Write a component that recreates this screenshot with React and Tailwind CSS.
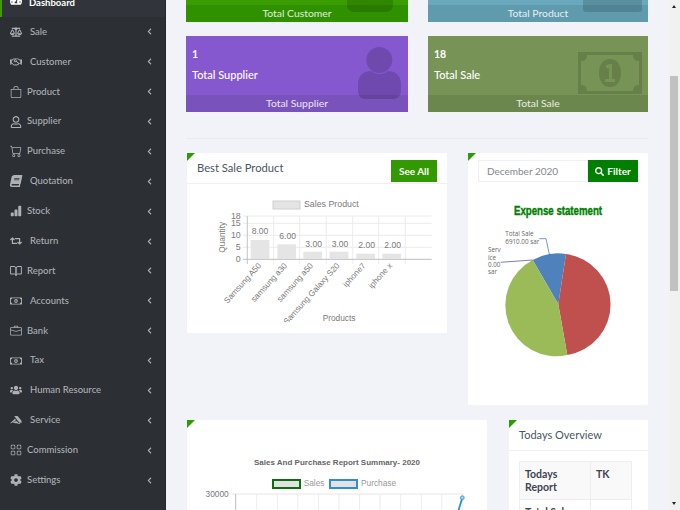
import React from "react";
import {
  FaBalanceScale,
  FaRegHandshake,
  FaRegUser,
  FaBook,
  FaRetweet,
  FaRegMoneyBillAlt,
  FaUsers,
  FaAccusoft,
  FaCog,
  FaSearch,
  FaChevronLeft,
  FaTachometerAlt,
} from "react-icons/fa";
import { BsBag, BsCart, BsBriefcase, BsGrid, BsBarChartFill } from "react-icons/bs";
import { FiBookOpen } from "react-icons/fi";

const menu = [
  { label: "Sale", Icon: FaBalanceScale, box: "w-[20px]" },
  { label: "Customer", Icon: FaRegHandshake, box: "w-[20px]" },
  { label: "Product", Icon: BsBag, box: "w-[17px]" },
  { label: "Supplier", Icon: FaRegUser, box: "w-[17px]" },
  { label: "Purchase", Icon: BsCart, box: "w-[17px]" },
  { label: "Quotation", Icon: FaBook, box: "w-[20px] -skew-x-12" },
  { label: "Stock", Icon: BsBarChartFill, box: "w-[17px]" },
  { label: "Return", Icon: FaRetweet, box: "w-[20px]" },
  { label: "Report", Icon: FiBookOpen, box: "w-[17px]" },
  { label: "Accounts", Icon: FaRegMoneyBillAlt, box: "w-[20px]" },
  { label: "Bank", Icon: BsBriefcase, box: "w-[17px]" },
  { label: "Tax", Icon: FaRegMoneyBillAlt, box: "w-[20px]" },
  { label: "Human Resource", Icon: FaUsers, box: "w-[20px]" },
  { label: "Service", Icon: FaAccusoft, box: "w-[20px]" },
  { label: "Commission", Icon: BsGrid, box: "w-[17px]" },
  { label: "Settings", Icon: FaCog, box: "w-[17px]" },
];

const Sidebar = () => (
  <aside className="w-[166px] h-[510px] shrink-0 bg-[#2c2f34] border-r border-[#24272b] font-['Lato',sans-serif] overflow-hidden">
    <div className="h-[17px] flex items-center pl-[8px] border-l-2 border-[#3c9c00] bg-[#31353b] text-white font-bold text-[9.5px] leading-none">
      <FaTachometerAlt className="text-[12px] w-[19px] pr-[7px] -mt-[18px]" />
      <span className="-mt-[12px]">Dashboard</span>
    </div>
    {menu.map(({ label, Icon, box }) => (
      <div
        key={label}
        className="h-[29.88px] flex items-center pl-[10px] text-[#adb0b4] font-medium text-[9.5px]"
      >
        <span className={`${box} shrink-0`}>
          <Icon className="text-[12px]" />
        </span>
        <span className="flex-1">{label}</span>
        <FaChevronLeft className="text-[7px] mr-[12px]" />
      </div>
    ))}
  </aside>
);

const StatCard = ({ bg, foot, value, title, children }) => (
  <div className={`relative h-[76px] overflow-hidden ${bg} text-white font-['Lato',sans-serif]`}>
    <div className="pl-[6px] pt-[12px]">
      <div className="text-[10.5px] font-bold leading-[13px]">{value}</div>
      <div className="text-[11px] font-medium leading-[14px] mt-[7px]">{title}</div>
    </div>
    <div className={`absolute bottom-0 left-0 right-0 h-[17px] ${foot} text-center text-[10.4px] leading-[16px] text-white/85`}>
      {title}
    </div>
    {children}
  </div>
);

const Corner = () => (
  <span className="absolute left-0 top-0 border-t-[8px] border-r-[8px] border-t-[#2a9d00] border-r-transparent" />
);

const BarChart = () => {
  const bars = [
    [250.7, 240, "8.00", 260, 234.3],
    [277.3, 244.3, "6.00", 287.7, 239],
    [303.3, 251.7, "3.00", 313.7, 246.7],
    [329.7, 251.7, "3.00", 340, 246.7],
    [356.3, 253.7, "2.00", 366.7, 248.3],
    [382.3, 253.7, "2.00", 392.7, 248.3],
  ];
  const names = [
    ["Samsung A50", 261.7],
    ["samsung a30", 287.5],
    ["samsung a50", 313.5],
    ["Samsung Galaxy S20", 340],
    ["iphone7", 366],
    ["iphone x", 392.7],
  ];
  return (
    <svg viewBox="187 184 260 138" className="w-[260px] h-[138px] block" fontFamily="Liberation Sans, sans-serif" fill="#7a7a7a">
      <rect x="273" y="201" width="27" height="8" fill="#e4e4e4" stroke="#cfcfcf" />
      <text x="304" y="207" fontSize="8.8">Sales Product</text>
      {[216, 223.3, 235.3, 247.3].map((y) => (
        <line key={y} x1="243" x2="431.7" y1={y} y2={y} stroke="#ececec" />
      ))}
      {[273.7, 299.7, 326.3, 352.7, 378.7, 405.3].map((x) => (
        <line key={x} x1={x} x2={x} y1="216" y2="264" stroke="#ececec" />
      ))}
      <line x1="247.3" x2="247.3" y1="216" y2="264" stroke="#c4c4c4" />
      <line x1="243" x2="431.7" y1="259.3" y2="259.3" stroke="#bdbdbd" />
      {[["18", 219], ["15", 226.3], ["10", 238.3], ["5", 250.3], ["0", 262.3]].map(([t, y]) => (
        <text key={t} x="240.7" y={y} fontSize="8.8" textAnchor="end">{t}</text>
      ))}
      {bars.map(([x, y, t, tx, ty]) => (
        <g key={x}>
          <rect x={x} y={y} width="18.7" height={259 - y} fill="#e5e5e5" />
          <text x={tx} y={ty} fontSize="8.6" textAnchor="middle">{t}</text>
        </g>
      ))}
      {names.map(([t, x]) => (
        <text key={t} x={x} y="266" fontSize="8.2" textAnchor="end" transform={`rotate(-48 ${x} 266)`}>{t}</text>
      ))}
      <text x="339" y="321" fontSize="8.3" textAnchor="middle">Products</text>
      <text x="225.5" y="237.3" fontSize="8.3" textAnchor="middle" transform="rotate(-90 225.5 237.3)">Quantity</text>
    </svg>
  );
};

const PieChart = () => (
  <svg viewBox="468 192 180 213" className="w-[180px] h-[213px] block" fontFamily="Open Sans, sans-serif">
    <text x="558" y="215" fontSize="12" fontWeight="800" fill="#008000" stroke="#008000" strokeWidth="0.4" textAnchor="middle" textLength="88" lengthAdjust="spacingAndGlyphs" fontFamily="Liberation Sans, sans-serif">Expense statement</text>
    <path d="M558.3 304.3 L532.7 260 A51 51 0 0 1 566 254 Z" fill="#4f81bd" />
    <path d="M558.3 304.3 L566 254 A51 51 0 0 1 567.3 355 Z" fill="#c0504d" />
    <path d="M558.3 304.3 L567.3 355 A51 51 0 0 1 532.7 260 Z" fill="#9bbb59" />
    <path d="M539.3 238.7 H546 L549.3 254" fill="none" stroke="#4f81bd" strokeWidth="0.8" />
    <path d="M500.7 262.3 L532.7 260" fill="none" stroke="#5a5f96" strokeWidth="0.8" />
    <g fontSize="6.3" fill="#666">
      <text x="505.3" y="236.2">Total Sale</text>
      <text x="505.3" y="243.9">6910.00 sar</text>
      <text x="488" y="252.2">Serv</text>
      <text x="488" y="259.6">ice</text>
      <text x="488" y="267">0.00</text>
      <text x="488" y="274.4">sar</text>
    </g>
  </svg>
);

const LineChart = () => {
  const grid = [];
  for (let i = 0; i < 11; i++) grid.push(256.7 + i * 20.57);
  return (
    <svg viewBox="187 420 300 90" className="w-[300px] h-[90px] block" fontFamily="Liberation Sans, sans-serif">
      <text x="337" y="464.5" fontSize="8" fontWeight="700" fill="#666" textAnchor="middle">Sales And Purchase Report Summary- 2020</text>
      <rect x="273" y="480" width="27" height="8" fill="#e2e2e2" stroke="#0b700b" strokeWidth="2" />
      <text x="303.7" y="485.5" fontSize="8.3" fill="#999">Sales</text>
      <rect x="330" y="480" width="27" height="8" fill="#e2e2e2" stroke="#2f8fce" strokeWidth="2" />
      <text x="361" y="485.5" fontSize="8.3" fill="#999">Purchase</text>
      <text x="228.7" y="496.5" fontSize="8.3" fill="#777" textAnchor="end">30000</text>
      <line x1="232" x2="464" y1="494" y2="494" stroke="#e6e6e6" />
      {grid.map((x) => (
        <line key={x} x1={x} x2={x} y1="494" y2="510" stroke="#ececec" />
      ))}
      <line x1="235.7" x2="235.7" y1="494" y2="510" stroke="#bdbdbd" />
      <path d="M458 512 L462.3 497.7" stroke="#2f8fce" strokeWidth="1.8" fill="none" />
      <circle cx="462.3" cy="497.7" r="1.9" fill="#a9cfe8" stroke="#2f8fce" strokeWidth="0.8" />
    </svg>
  );
};

const Scrollbar = () => (
  <div className="absolute right-0 top-0 h-[510px] w-[11px] bg-[#f1f1f1]">
    <span className="absolute left-[3px] top-[5px] border-x-[2.5px] border-b-[3px] border-x-transparent border-b-[#222]" />
    <div className="absolute left-[1px] top-[76px] w-[8px] h-[215px] bg-[#c1c1c1]" />
    <span className="absolute left-[3px] top-[502px] border-x-[2.5px] border-t-[3px] border-x-transparent border-t-[#222]" />
  </div>
);

const App = () => (
  <div className="relative w-[680px] h-[510px] overflow-hidden flex bg-[#f2f3f8]">
    <Sidebar />
    <main className="flex-1 pl-[20px] -mt-[54px] font-['Lato',sans-serif]">
      <div className="w-[462px] grid grid-cols-[222px_220px] gap-x-[20px] gap-y-[14px]">
        <StatCard bg="bg-[#3a9e00]" foot="bg-[#2f9100]" value="4" title="Total Customer">
          <div className="absolute right-[15px] bottom-[10px] w-[46px] h-[30px] rounded-b-[7px] bg-black/15" />
        </StatCard>
        <StatCard bg="bg-[#6aa9bd]" foot="bg-[#5f9aad]" value="26" title="Total Product">
          <div className="absolute right-[6px] bottom-[10px] w-[59px] h-[30px] rounded-b-[3px] bg-black/15" />
        </StatCard>
        <StatCard bg="bg-[#8558cf]" foot="bg-[#7a52bb]" value="1" title="Total Supplier">
          <svg className="absolute right-[7px] top-[11px] w-[43px] h-[52px]" viewBox="0 0 43 52">
            <circle cx="21.3" cy="13" r="13" fill="rgba(0,0,0,0.16)" />
            <path d="M0 43 V37 C0 28 6 24 13 24 C18 28 25 28 30 24 C37 24 43 28 43 37 V43 C43 49 39 52 36 52 H7 C3 52 0 49 0 43 Z" fill="rgba(0,0,0,0.16)" />
          </svg>
        </StatCard>
        <StatCard bg="bg-[#779355]" foot="bg-[#6c874d]" value="18" title="Total Sale">
          <svg className="absolute right-[6px] top-[16px] w-[64px] h-[42px]" viewBox="0 0 64 42">
            <path
              fillRule="evenodd"
              d="M0 0 H64 V42 H0 Z M9 3 C9 7 7 9 3 9 V33 C7 33 9 35 9 39 H55 C55 35 57 33 61 33 V9 C57 9 55 7 55 3 Z M32 7 C39 7 43 13 43 21 C43 29 39 35 32 35 C25 35 21 29 21 21 C21 13 25 7 32 7 Z M28 13 V16 H31 V27 H27 V30 H37 V27 H34 V12 H31 C30.5 12.8 29.5 13 28 13 Z"
              fill="rgba(0,0,0,0.13)"
            />
          </svg>
        </StatCard>
      </div>

      <hr className="w-[462px] mt-[26px] mb-[14px] border-[#e8eaef]" />

      <div className="flex items-start pl-px">
        <section className="relative w-[260px] h-[180px] bg-white">
          <Corner />
          <div className="h-[31px] border-b border-[#eef0f3] flex items-center justify-between pl-[10px] pr-[10px]">
            <h3 className="text-[11.2px] text-[#4b5563] mt-[1px]">Best Sale Product</h3>
            <button className="w-[46px] h-[22px] mt-[6px] bg-[#339900] text-white text-[10px] font-bold">See All</button>
          </div>
          <BarChart />
        </section>

        <section className="relative ml-[21px] w-[180px] h-[252px] bg-white">
          <Corner />
          <div className="flex pl-[10px] pt-[7px] h-[39px]">
            <div className="w-[110px] h-[22px] border border-[#eef0f3] pl-[8px] text-[10px] leading-[20px] text-[#85888c]">December 2020</div>
            <button className="w-[50px] h-[22px] bg-[#008000] text-white text-[10px] font-bold flex items-center justify-center gap-[3px]">
              <FaSearch className="text-[9px]" />
              Filter
            </button>
          </div>
          <PieChart />
        </section>
      </div>

      <div className="flex items-start pl-px mt-[15px]">
        <section className="relative w-[300px] h-[90px] bg-white">
          <Corner />
          <LineChart />
        </section>

        <section className="relative ml-[22px] w-[139px] h-[90px] bg-white overflow-hidden">
          <Corner />
          <h3 className="h-[31px] border-b border-[#eef0f3] pl-[10px] pt-[7px] text-[11px] leading-[16px] text-[#4b5563]">Todays Overview</h3>
          <table className="ml-[10px] mt-[10px] w-[113px] border-collapse text-[10.5px] text-[#3d4452] font-bold">
            <tbody>
              <tr className="bg-[#f9f9f9]">
                <td className="w-[71px] h-[38px] border border-[#eeeeee] pl-[5px] align-top pt-[6px] leading-[13px]">Todays Report</td>
                <td className="border border-[#eeeeee] pl-[5px] align-top pt-[6px] leading-[13px]">TK</td>
              </tr>
              <tr>
                <td className="border border-[#eeeeee] pl-[5px] pt-[6px] leading-[13px]">Total Sale</td>
                <td className="border border-[#eeeeee]"></td>
              </tr>
            </tbody>
          </table>
        </section>
      </div>
    </main>
    <Scrollbar />
  </div>
);

export default App;
